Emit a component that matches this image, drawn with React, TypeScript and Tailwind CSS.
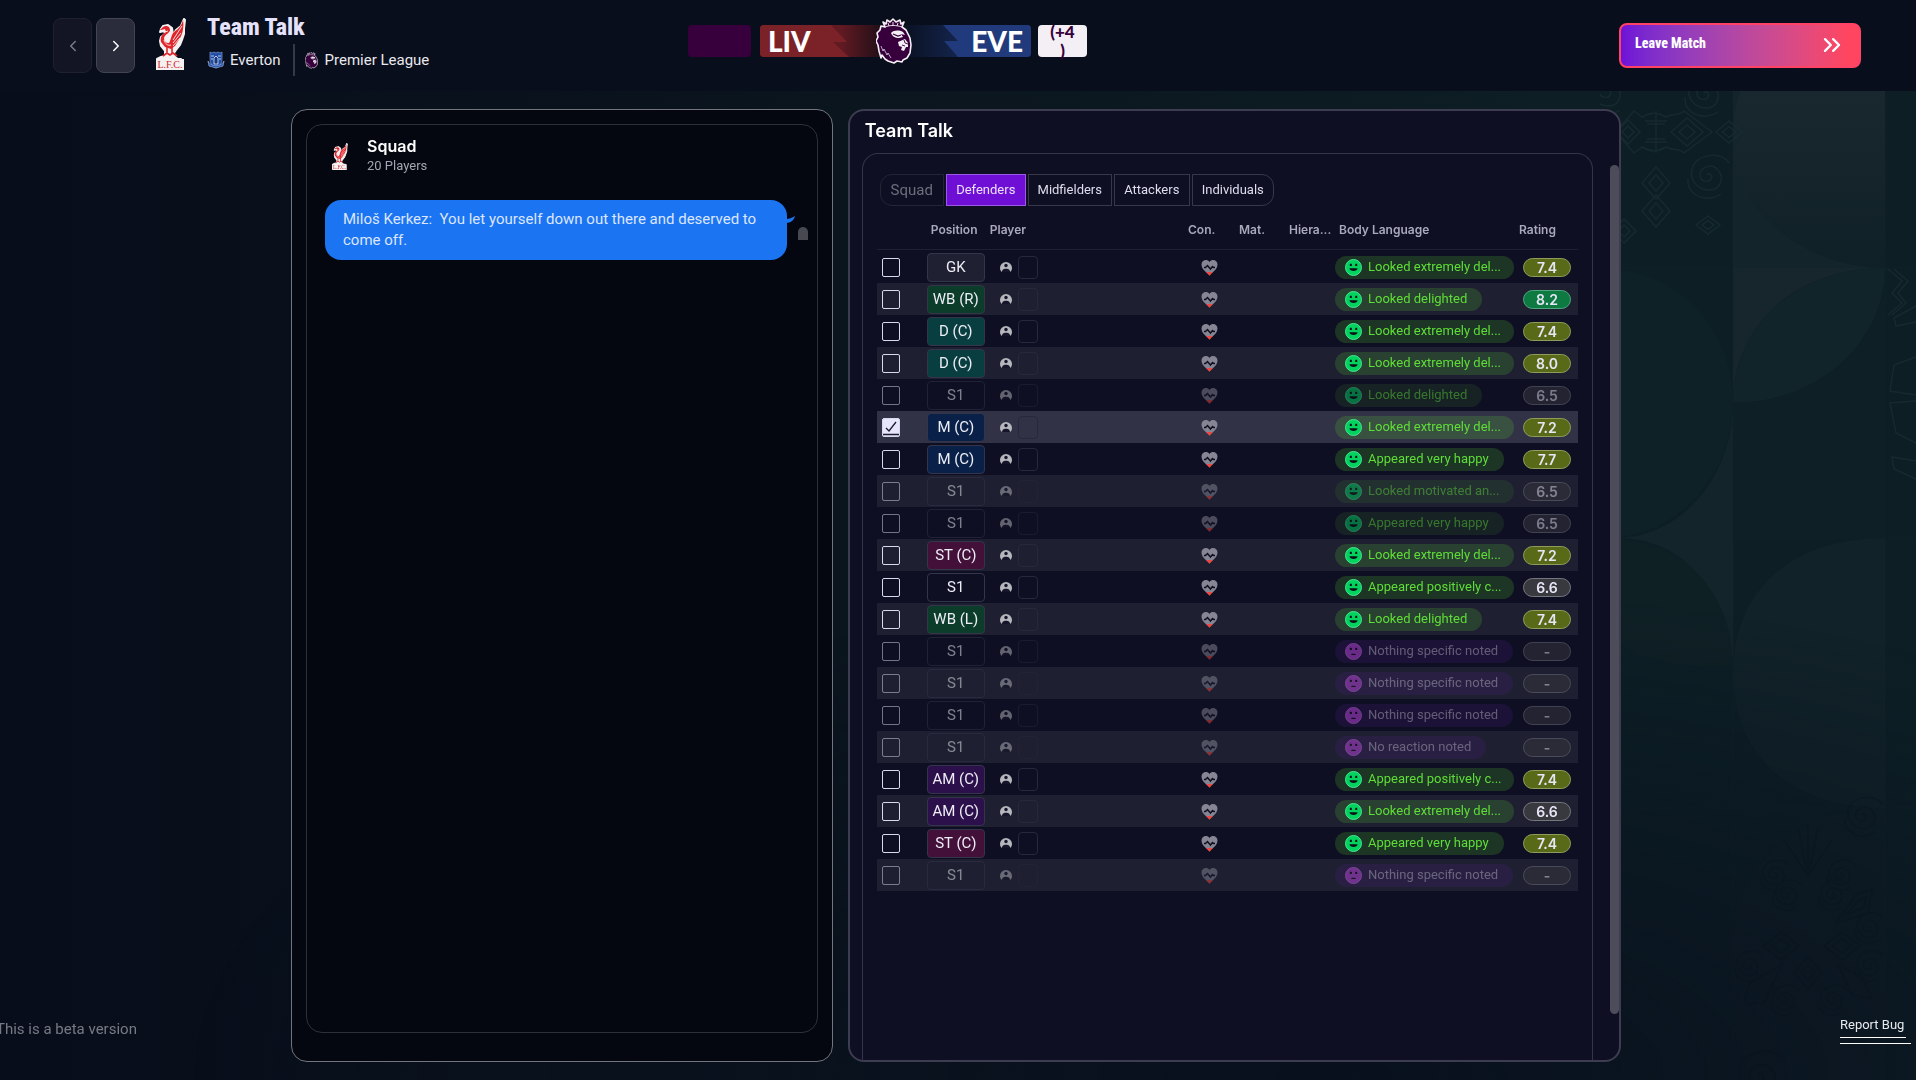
import React from "react";
import { ChevronLeft, ChevronRight, ChevronsRight } from "lucide-react";

type Mood = "happy" | "flat";
type Row = {
  pos: string;
  tone: string;
  body: string;
  mood: Mood;
  rating: string;
  off?: boolean;
  checked?: boolean;
};

const NONE = "bg-transparent";
const GK = "bg-[#1f2032]";
const WB = "bg-[#0c3d2b]";
const DC = "bg-[#083e40]";
const MC = "bg-[#092149]";
const ST = "bg-[#431039]";
const AM = "bg-[#2c104c]";

const rows: Row[] = [
  { pos: "GK", tone: GK, body: "Looked extremely del...", mood: "happy", rating: "7.4" },
  { pos: "WB (R)", tone: WB, body: "Looked delighted", mood: "happy", rating: "8.2" },
  { pos: "D (C)", tone: DC, body: "Looked extremely del...", mood: "happy", rating: "7.4" },
  { pos: "D (C)", tone: DC, body: "Looked extremely del...", mood: "happy", rating: "8.0" },
  { pos: "S1", tone: NONE, body: "Looked delighted", mood: "happy", rating: "6.5", off: true },
  { pos: "M (C)", tone: MC, body: "Looked extremely del...", mood: "happy", rating: "7.2", checked: true },
  { pos: "M (C)", tone: MC, body: "Appeared very happy", mood: "happy", rating: "7.7" },
  { pos: "S1", tone: NONE, body: "Looked motivated an...", mood: "happy", rating: "6.5", off: true },
  { pos: "S1", tone: NONE, body: "Appeared very happy", mood: "happy", rating: "6.5", off: true },
  { pos: "ST (C)", tone: ST, body: "Looked extremely del...", mood: "happy", rating: "7.2" },
  { pos: "S1", tone: NONE, body: "Appeared positively c...", mood: "happy", rating: "6.6" },
  { pos: "WB (L)", tone: WB, body: "Looked delighted", mood: "happy", rating: "7.4" },
  { pos: "S1", tone: NONE, body: "Nothing specific noted", mood: "flat", rating: "-", off: true },
  { pos: "S1", tone: NONE, body: "Nothing specific noted", mood: "flat", rating: "-", off: true },
  { pos: "S1", tone: NONE, body: "Nothing specific noted", mood: "flat", rating: "-", off: true },
  { pos: "S1", tone: NONE, body: "No reaction noted", mood: "flat", rating: "-", off: true },
  { pos: "AM (C)", tone: AM, body: "Appeared positively c...", mood: "happy", rating: "7.4" },
  { pos: "AM (C)", tone: AM, body: "Looked extremely del...", mood: "happy", rating: "6.6" },
  { pos: "ST (C)", tone: ST, body: "Appeared very happy", mood: "happy", rating: "7.4" },
  { pos: "S1", tone: NONE, body: "Nothing specific noted", mood: "flat", rating: "-", off: true },
];

function ratingTone(r: string) {
  const n = Number(r);
  if (n > 8.1) return "bg-[#0d7a42] border-[#4fa57c]";
  if (n >= 7) return "bg-[#586a17] border-[#8f9c5c]";
  return "bg-[#38383f] border-[#76767f]";
}

function LiverBird({ className }: { className: string }) {
  return (
    <svg viewBox="0 0 30 52" className={className} aria-label="Liverpool">
      <path
        d="M5 11l2-3 5-1 4 3 1 7 3-5 5-4 3-7 1 1-1 9 0 5-2 6-2 5-4 5-2 3 1 4 3 2h3v9H1v-9l4-2 4-1v-5l-4-5-1-5 1-4 4-3-1-3-4 1z"
        fill="#f6f1f1"
        stroke="#f6f1f1"
        strokeWidth="2"
        strokeLinejoin="round"
      />
      <path
        d="M4 12l3-3c3-2 7-1 7 3 0 3-5 4-6 8 0 3 2 5 5 5 2-3 2-7 4-10 3-3 8-5 10-13 1 6 0 13-3 18l-5 8-4 3-6-2-4-5c-1-5 1-8 5-10l-1-3-4 1z"
        fill="#e0252b"
      />
      <path d="M17 22l9-14M17 25l8-10M17 28l7-8M12 13l-3 1M8 22c1 4 4 6 7 5" stroke="#f6f1f1" strokeWidth="0.9" fill="none" />
      <path d="M11 29v7M16 29v7M7 38l4-3 3 2 3-2 4 3" stroke="#e0252b" strokeWidth="1.6" fill="none" />
      <rect x="0" y="41" width="28" height="11" fill="#f6f1f1" />
      <text x="14" y="50" textAnchor="middle" fontSize="10" fontFamily="Liberation Serif, serif" fill="#d3262c">
        L.F.C.
      </text>
    </svg>
  );
}

function EvertonCrest() {
  return (
    <svg viewBox="0 0 18 18" className="h-[18px] w-[18px]" aria-hidden="true">
      <path d="M3 1l2 1 2-1 2 1 2-1 2 1 2-1v4c0 6 0 8-6 12C3 13 3 11 3 5z" fill="#1f4ba5" stroke="#7c9cd8" strokeWidth="0.7" />
      <path d="M1 10c2 4 5 4 8 5 3-1 6-1 8-5l-1 5-7 2-7-2z" fill="#2857b3" stroke="#a9bfe6" strokeWidth="0.6" />
      <path d="M7 13V7l2-2 2 2v6zM4 5h3M11 5h3M4 8h2M12 8h2" fill="#16387f" stroke="#dfe8f8" strokeWidth="0.8" />
    </svg>
  );
}

function LeagueLion({ className }: { className: string }) {
  return (
    <svg viewBox="0 0 36 47" className={className} aria-label="Premier League">
      <path
        d="M9 9L7 4l3 2 1-4 3 2 3-3 3 3 4-2 1 4 3-2-2 5 4 3 2 4 2 4 1 7-1 8-3 5-4 2-1 2-5-1-3 2-6-2-3-2-3-4-1 3-2-7-1-6-2-4 2-4-1-4 3-3 1-4z"
        fill="#37003c"
        stroke="#f4eff5"
        strokeWidth="1.6"
        strokeLinejoin="round"
      />
      <path d="M9 9c5-2 11-2 17 0M12 5l1 3M17 4v4M22 5l-1 3" stroke="#f4eff5" strokeWidth="0.9" fill="none" />
      <path d="M15 15c3-3 8-3 12-1l2 3-4-1 2 3-4 1c-4 0-7-2-8-5z" fill="#f4eff5" />
      <path d="M17 16l5 2 3-1" stroke="#37003c" strokeWidth="1.2" fill="none" />
      <path d="M22 24l7-3 3 4 0 4-2 0-2 4-3-1 1-3-3-1z" fill="#f4eff5" />
      <path d="M28 22l1 3 3 1M26 27l3 1" stroke="#37003c" strokeWidth="0.9" fill="none" />
      <path d="M5 28l2 5 1-2 3 6 1-2 3 5" stroke="#f4eff5" strokeWidth="0.7" fill="none" />
    </svg>
  );
}

function HeartPulse() {
  return (
    <svg viewBox="0 0 17 17" className="ml-[17px] h-[17px] w-[17px]" aria-hidden="true">
      <path d="M8.500 16.500C6 13.500 0.500 10.500 0.500 5.500 0.500 1 6 -0.500 8.500 3 11 -0.500 16.500 1 16.500 5.500 16.500 10.500 11 13.500 8.500 16.500z" fill="#858594" />
      <path d="M5.300 13h6.400l-3.200 3.700z" fill="#f4453f" />
      <path d="M3 8.500h1.500l2-2 3 3.500 2-2.500 1.200 1H14" stroke="#0f0f23" strokeWidth="1.500" fill="none" />
    </svg>
  );
}

function PersonIcon() {
  return (
    <svg viewBox="0 0 12 10" className="h-[10px] w-[12px]" aria-hidden="true">
      <path d="M1.500 10A6 6 0 1 1 10.500 10L9 7.500H3z" fill="#b6b6bd" />
      <circle cx="6" cy="3.500" r="1.700" fill="#14142a" />
      <path d="M2.500 10C3 7 4.500 6.800 6 6.800S9 7 9.500 10z" fill="#14142a" />
    </svg>
  );
}

function Face({ mood }: { mood: Mood }) {
  const happy = mood === "happy";
  return (
    <svg viewBox="0 0 17 17" className="h-[17px] w-[17px] shrink-0" aria-hidden="true">
      <circle cx="8.500" cy="8.500" r="8" fill={happy ? "#00d45f" : "#c445ea"} stroke={happy ? "#4be391" : "#d06cf0"} />
      <rect x="4.800" y="4.800" width="2" height="2.200" fill="#0a1014" />
      <rect x="10.200" y="4.800" width="2" height="2.200" fill="#0a1014" />
      {happy ? (
        <path d="M4.500 9.200h8c0 3.600-8 3.600-8 0z" fill="#0a1014" />
      ) : (
        <path d="M6 12c0-1.800 5-1.800 5 0z" fill="#0a1014" />
      )}
    </svg>
  );
}

function Spiral({ x, y, s = 1 }: { x: number; y: number; s?: number }) {
  return (
    <g transform={`translate(${x} ${y}) scale(${s})`}>
      <path d="M0 0c2-3 6 0 4 4s-11 3-11-4 11-13 18-5 2 21-10 20-20-12-15-24S14-24 22-12" />
      <path d="M-19 4C-20 22 2 28 14 19" />
    </g>
  );
}

function Diamond({ x, y, w, h }: { x: number; y: number; w: number; h: number }) {
  return (
    <path
      d={`M${x - w} ${y}L${x} ${y - h}L${x + w} ${y}L${x} ${y + h}zM${x - w / 2} ${y}L${x} ${y - h / 2}L${x + w / 2} ${y}L${x} ${y + h / 2}z`}
    />
  );
}

function Backdrop() {
  return (
    <svg viewBox="0 0 316 989" preserveAspectRatio="xMaxYMin slice" className="absolute inset-y-0 right-0 h-full w-[316px]" aria-hidden="true">
      <defs>
        <linearGradient id="fade" x1="0" y1="0" x2="0" y2="1">
          <stop offset="0" stopColor="#18282e" />
          <stop offset="1" stopColor="#0f2026" />
        </linearGradient>
      </defs>
      <path d="M133 0v177h152V0z" fill="#13252b" />
      <path d="M133 45Q133 20 141 0H285V177C220 177 160 140 133 80z" fill="url(#fade)" />
      <path d="M133 177h152C190 177 133 240 133 312z" fill="#16262c" />
      <path d="M285 177C190 177 133 240 133 312 220 312 285 250 285 177z" fill="#11242a" />
      <path d="M133 312c88 0 152-62 152-135v270H133z" fill="#0e1f26" />
      <path d="M20 179c65 8 113 63 113 133S80 440 20 446z" fill="#0e2127" />
      <path d="M20 447c65-3 113-65 113-135v270C133 500 80 447 20 447z" fill="#13242a" />
      <path d="M20 448c70 6 113 59 113 129C90 577 30 570 20 550z" fill="#0f2025" />
      <path d="M285 447C190 447 133 500 133 582S190 717 285 717z" fill="#112228" />
      <path d="M285 717c-90 0-152 60-152 137v135h152z" fill="#0f1f26" />
      <g fill="none" stroke="#1a2f34" strokeWidth="1.500" opacity="0.700">
        <path d="M20 36l14-16 8 6c8-5 16-5 24 0 8-5 12 0 18-6l28 21-28 21c-6-6-10-1-18-6-8 5-16 5-24 0l-8 6-14-16" />
        <Diamond x={28} y={41} w={12} h={12} />
        <Diamond x={87} y={41} w={16} h={14} />
        <Diamond x={129} y={41} w={13} h={11} />
        <path d="M56 20v42M45 30h22M45 51h22M47 33h18M47 48h18" />
        <Diamond x={56} y={92} w={14} h={16} />
        <Diamond x={56} y={120} w={14} h={16} />
        <Spiral x={107} y={84} />
        <Spiral x={104} y={2} />
        <Spiral x={6} y={0} />
        <Diamond x={108} y={134} w={12} h={9} />
        <Diamond x={24} y={140} w={12} h={12} />
        <path d="M288 178l14 12-10 12 10 10-14 12M294 178l14 12-10 12 8 10-14 12M316 215l-22 12 2 8 20-4M316 266l-22 8-4 26 26 4M316 310l-26 2 6 30 20 10M316 370l-24-4 2 12 22 10" />
      </g>
      <g fill="none" stroke="#0a1920" strokeWidth="1.800" opacity="0.500">
        <path d="M208 785l-24-36M208 785l-10-48M208 785l0-50M208 785l10-48M208 785l24-36" />
        <Spiral x={262} y={724} s={0.9} />
        <Spiral x={174} y={783} s={0.7} />
        <Spiral x={240} y={783} s={0.7} />
        <Spiral x={186} y={803} s={0.7} />
        <Spiral x={232} y={803} s={0.7} />
        <Spiral x={268} y={836} s={0.7} />
        <Spiral x={148} y={874} s={0.7} />
        <Spiral x={268} y={874} s={0.7} />
        <Spiral x={184} y={908} s={0.7} />
        <Spiral x={232} y={908} s={0.7} />
        <Diamond x={181} y={855} w={18} h={14} />
        <Diamond x={242} y={855} w={18} h={14} />
        <Diamond x={208} y={882} w={14} h={16} />
        <path d="M236 832l20-28 16-6-4 24zM246 824l12-14 8-4-2 10zM144 912l6-20 32-18-18 38zM238 874l24 12 10 22-20-4z" />
        <Spiral x={158} y={984} s={1.2} />
      </g>
      <path d="M133 0v989M285 0v989M20 177h296M20 447h296M20 717h296" stroke="#16292f" strokeWidth="1" opacity="0.300" />
    </svg>
  );
}

function Header() {
  return (
    <header className="relative grid h-[91px] shrink-0 grid-cols-[635fr_auto_774fr] items-start bg-[#080e1b] pr-[55px] pl-[53px]">
      <div className="flex pt-[18px]">
        <nav className="flex gap-1" aria-label="History">
          <button aria-label="Back" className="flex h-[55px] w-[39px] items-center justify-center rounded-lg border border-[#20212f] bg-[#131524] text-[#7c7c88]">
            <ChevronLeft className="h-[18px] w-[18px]" />
          </button>
          <button aria-label="Forward" className="flex h-[55px] w-[39px] items-center justify-center rounded-lg border border-[#444552] bg-[#2a2b3b] text-white">
            <ChevronRight className="h-[18px] w-[18px]" />
          </button>
        </nav>
        <LiverBird className="ml-[21px] h-[52px] w-[30px]" />
        <div className="-mt-2 ml-[21px]">
          <h1 className="font-['Roboto_Condensed','Open_Sans_Condensed','Noto_Sans_Condensed',Roboto,sans-serif] text-[24px] leading-[34px] font-extrabold text-[#e6e2fb]">Team Talk</h1>
          <div className="flex h-8 items-center text-[15px] text-[#e8e8ee]">
            <EvertonCrest />
            <span className="ml-[5px]">Everton</span>
            <span className="mr-[10px] ml-[12px] h-8 w-[2px] bg-[#363946]" />
            <LeagueLion className="h-[17px] w-[13px]" />
            <span className="ml-[7px]">Premier League</span>
          </div>
        </div>
      </div>

      <div className="flex items-start gap-[7px] pt-[25px]">
        <div className="mr-[2px] h-8 w-[63px] rounded bg-[#37003c]" />
        <div className="relative flex h-8 w-[271px] items-center justify-between rounded bg-[#0a0f1c] font-[Lato,sans-serif] text-[28px] leading-8 font-black text-white">
          <svg viewBox="0 0 271 32" className="absolute inset-0 h-full w-full" aria-hidden="true">
            <defs>
              <linearGradient id="home">
                <stop offset="0" stopColor="#701d25" />
                <stop offset="0.600" stopColor="#601a22" />
                <stop offset="1" stopColor="#0a0a14" />
              </linearGradient>
              <linearGradient id="away">
                <stop offset="0" stopColor="#080e1b" />
                <stop offset="0.700" stopColor="#1a2f66" />
              </linearGradient>
              <clipPath id="board"><rect width="271" height="32" rx="4" /></clipPath>
            </defs>
            <g clipPath="url(#board)">
              <rect width="136" height="32" fill="url(#home)" />
              <path d="M0 0h71l16 17h-14l16 15H0z" fill="#7b2229" />
              <rect x="136" width="135" height="32" fill="url(#away)" />
              <path d="M183 0h88v32h-73l-14-16h14z" fill="#213a7c" />
            </g>
          </svg>
          <span className="relative pl-[8px]">LIV</span>
          <LeagueLion className="absolute top-[-7px] left-[116px] h-[47px] w-[36px]" />
          <span className="relative pr-[8px]">EVE</span>
        </div>
        <div className="flex h-8 w-[49px] flex-col items-center justify-center rounded bg-[#f3eff4] font-[Lato,sans-serif] text-[17px] leading-[19px] font-black text-[#37003c]">
          <span>(+4</span>
          <span>)</span>
        </div>
      </div>

      <div className="flex justify-end pt-[23px]">
        <button className="flex h-[45px] w-[242px] items-start justify-between rounded-lg border-2 border-[#ff4266] bg-linear-to-r from-[#6f10d8] to-[#ff4560] to-95% pr-[13px] pl-[14px] text-white">
          <span className="mt-[6px] font-['Roboto_Condensed','Open_Sans_Condensed','Noto_Sans_Condensed',Roboto,sans-serif] text-[14px] leading-6 font-extrabold">Leave Match</span>
          <ChevronsRight className="mt-[6px] h-[28px] w-[28px]" />
        </button>
      </div>
    </header>
  );
}

function ChatPanel() {
  return (
    <section className="flex flex-[541] flex-col rounded-2xl border border-[#74757c] bg-[#04070f] px-[14px] pt-[14px] pb-7">
      <div className="flex-1 rounded-2xl border border-[#2e2f3a] px-[18px] pt-[11px]">
        <div className="flex items-center pl-[7px]">
          <LiverBird className="h-[27px] w-4" />
          <div className="ml-[19px]">
            <h2 className="font-[Inter,sans-serif] text-base leading-5 font-semibold text-white">Squad</h2>
            <p className="text-[13px] leading-5 text-[#a3a5b0]">20 Players</p>
          </div>
        </div>
        <div className="relative mt-6 mr-3 rounded-2xl bg-[#1b74f2] px-[18px] py-[9px] text-[15px] leading-[21px] text-[#dbe6ff]">
          <p className="whitespace-pre-wrap">Miloš Kerkez:  You let yourself down out there and deserved to come off.</p>
          <svg viewBox="0 0 9 7" className="absolute top-4 -right-2 h-[7px] w-[9px]" aria-hidden="true">
            <path d="M0 3c3 0 6-1 9-3-1 4-4 7-9 7z" fill="#1b74f2" />
          </svg>
          <span className="absolute top-[27px] right-[-21px] h-[13px] w-[10px] rounded-t-md bg-[#484950]" />
        </div>
      </div>
    </section>
  );
}

const tabs = [
  { name: "Squad", cls: "w-[64px] rounded-l-xl border-[#232435] text-[15px] text-[#6d6e7b]" },
  { name: "Defenders", cls: "w-[80px] border-[#9a5ae6] bg-[#6f0fd6] text-[13px] text-[#ece2fb]" },
  { name: "Midfielders", cls: "w-[84px] border-[#373849] text-[13px] text-[#dedeee]" },
  { name: "Attackers", cls: "w-[76px] border-[#373849] text-[13px] text-[#dedeee]" },
  { name: "Individuals", cls: "w-[82px] rounded-r-xl border-[#373849] text-[13px] text-[#dedeee]" },
];

function SquadRow({ row, index }: { row: Row; index: number }) {
  const dim = row.off ? "opacity-50" : "";
  const pill = row.mood === "happy" ? "bg-[#55cf2f]/20 text-[#5fdd38]" : "bg-[#7a1fc0]/25 text-[#b4abc6]";
  const stripe = row.checked ? "bg-[#323246]" : index % 2 ? "bg-[#1e1f31]" : "";
  return (
    <tr className={`h-8 ${stripe}`}>
      <td>
        <span className={`ml-[5px] grid h-[19px] w-[18px] ${dim}`}>
          <input
            type="checkbox"
            defaultChecked={row.checked}
            disabled={row.off}
            aria-label={`Select player ${index + 1}, ${row.pos}`}
            className="peer col-start-1 row-start-1 h-[19px] w-[18px] appearance-none rounded-xs border border-[#d9d9ee] checked:bg-[#e6e5fb]"
          />
          <svg viewBox="0 0 18 19" className="pointer-events-none invisible col-start-1 row-start-1 peer-checked:visible" aria-hidden="true">
            <path d="M4 10l3 3 7-9M1 16.500h16" stroke="#1c1c30" strokeWidth="1.300" fill="none" />
          </svg>
        </span>
      </td>
      <td>
        <span className={`flex h-[29px] w-[58px] items-center justify-center rounded border border-[#34354a] text-[15px] text-[#ededf5] ${row.tone} ${dim}`}>{row.pos}</span>
      </td>
      <td>
        <span className={`ml-[13px] flex items-center gap-[6px] ${dim}`}>
          <PersonIcon />
          <span className="h-[23px] w-5 rounded border border-[#27283a]" />
        </span>
      </td>
      <td><span className={`block ${dim}`}><HeartPulse /></span></td>
      <td />
      <td />
      <td>
        <span className={`flex h-[23px] w-fit max-w-[179px] items-center gap-[6px] rounded-full pr-[15px] pl-[10px] text-[13px] whitespace-nowrap ${pill} ${dim}`}>
          <Face mood={row.mood} />
          {row.body}
        </span>
      </td>
      <td>
        <span className={`ml-[6px] flex h-[19px] w-12 items-center justify-center rounded-full border font-[Inter,sans-serif] text-[14px] font-semibold text-[#e8e6f6] ${ratingTone(row.rating)} ${dim}`}>{row.rating}</span>
      </td>
    </tr>
  );
}

function TalkPanel() {
  return (
    <section className="relative flex flex-[773] flex-col overflow-hidden rounded-2xl border-2 border-[#3d3c50] bg-[#0f0f23] pr-[26px] pl-3">
      <h2 className="pt-[6px] pl-[3px] font-[Inter,sans-serif] text-[18px] leading-7 font-semibold text-white">Team Talk</h2>
      <div className="mt-[8px] flex-1 rounded-t-2xl border border-b-0 border-[#34354a] px-[14px] pt-5">
        <div className="ml-[3px] flex gap-[2px]" role="tablist">
          {tabs.map((t, i) => (
            <button key={t.name} role="tab" aria-selected={i === 1} className={`h-8 border ${t.cls}`}>
              {t.name}
            </button>
          ))}
        </div>
        <table className="mt-[3px] w-full table-fixed border-collapse">
          <colgroup>
            <col className="w-[50px]" />
            <col className="w-[60px]" />
            <col />
            <col className="w-[51px]" />
            <col className="w-[50px]" />
            <col className="w-[50px]" />
            <col className="w-[182px]" />
            <col className="w-[61px]" />
          </colgroup>
          <thead>
            <tr className="h-10 border-b border-[#1f2033] text-left font-[Inter,sans-serif] text-[12px] text-[#a9a9bb] *:pt-[2px] *:font-semibold">
              <th aria-label="Selected" />
              <th className="pl-[4px]">Position</th>
              <th className="pl-[3px]">Player</th>
              <th className="pl-[4px]">Con.</th>
              <th className="pl-[4px]">Mat.</th>
              <th className="pl-[4px] whitespace-nowrap">Hiera...</th>
              <th className="pl-[4px]">Body Language</th>
              <th className="pl-[2px]">Rating</th>
            </tr>
          </thead>
          <tbody>
            <tr className="h-[2px]" aria-hidden="true"><td colSpan={8} /></tr>
            {rows.map((r, i) => <SquadRow key={i} row={r} index={i} />)}
          </tbody>
        </table>
      </div>
      <span className="absolute top-[54px] right-0 bottom-[46px] w-[9px] rounded-full bg-[#4c4c5b]" />
    </section>
  );
}

export default function App() {
  return (
    <div className="flex h-screen min-h-[900px] flex-col bg-[#070d1a] font-[Roboto,'Liberation_Sans',sans-serif]">
      <Header />
      <main className="relative grid flex-1 grid-cols-[291fr_1330fr_295fr] overflow-hidden bg-linear-to-r from-[#070d1a] via-[#0b161e] to-[#0d1f25] to-85% pt-[18px] pb-[18px]">
        <Backdrop />
        <div className="absolute inset-0 bg-[radial-gradient(ellipse_60%_50%_at_70%_100%,#080f1de6,transparent)]" />
        <p className="relative -ml-1 self-end pb-5 text-[15px] leading-[26px] text-[#777a84]">This is a beta version</p>
        <div className="relative flex gap-[15px]">
          <ChatPanel />
          <TalkPanel />
        </div>
        <div className="relative flex items-end justify-end pr-[5px] pb-[18px]">
          <a href="#report" className="w-[71px] border-b border-white text-[13px] whitespace-nowrap text-[#e8eaee]">
            <span className="mb-[5px] block w-[66px] border-b border-white leading-6">Report Bug</span>
          </a>
        </div>
      </main>
    </div>
  );
}
